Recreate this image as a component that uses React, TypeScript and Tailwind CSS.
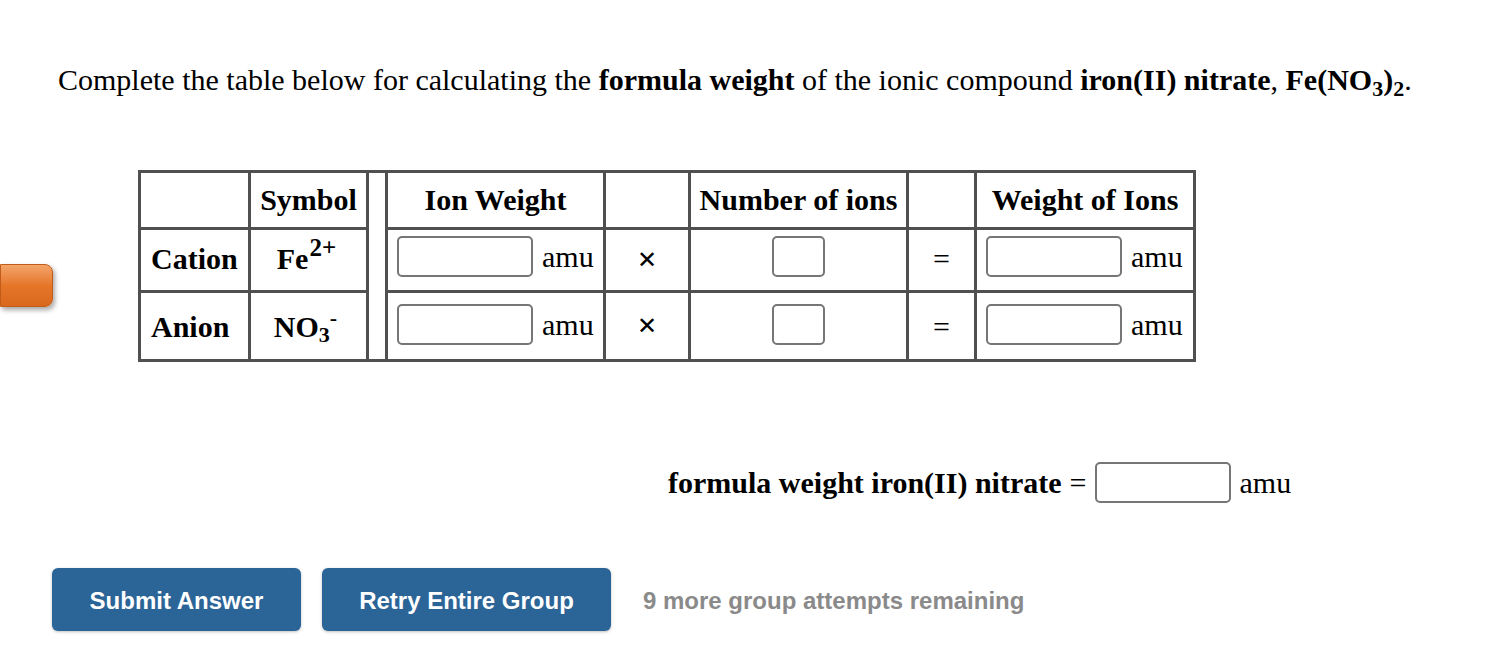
import React from 'react'

const serif = { fontFamily: '"Liberation Serif", "Times New Roman", serif' }

function Box({ w }: { w: string }) {
  return <input type="text" className={`${w} h-[41px] rounded-[5px] border-2 border-[#767676] bg-white outline-none`} />
}

function WeightCell({ pb }: { pb: string }) {
  return (
    <div className={`flex items-center gap-[9px] pl-[9px] ${pb}`}>
      <Box w="w-[136px]" />
      <span>amu</span>
    </div>
  )
}

export default function App() {
  const cell = 'border-[3px] border-[#505050] p-0'
  return (
    <div className="min-h-screen w-[1496px] bg-white relative" style={serif}>
      {/* side tab */}
      <div className="absolute left-0 top-[264px] w-[53px] h-[43px] rounded-r-[8px] bg-gradient-to-b from-[#f3a468] via-[#e57628] to-[#d9681d] border border-[#c25a18] shadow-[2px_3px_5px_rgba(0,0,0,0.35)]" />

      <div className="pt-[62px] pl-[58px] text-[30px] leading-[36px] text-black">
        Complete the table below for calculating the <b>formula weight</b> of the ionic compound{' '}
        <b>iron(II) nitrate</b>, <b>Fe(NO<sub className="text-[22px]">3</sub>)<sub className="text-[22px]">2</sub></b>.
      </div>

      <div className="pl-[138px] pt-[72px]">
        <table className="border-collapse table-fixed w-[1055px] text-[30px] border-[3px] border-[#505050]">
          <colgroup>
            <col className="w-[110px]" />
            <col className="w-[118px]" />
            <col className="w-[19px]" />
            <col className="w-[218px]" />
            <col className="w-[85px]" />
            <col className="w-[218px]" />
            <col className="w-[68px]" />
            <col className="w-[219px]" />
          </colgroup>
          <tbody>
            <tr className="h-[57px] font-bold">
              <td className={cell}></td>
              <td className={`${cell} text-center`}>
                <div className="pb-[2px]">Symbol</div>
              </td>
              <td className={cell} rowSpan={3}></td>
              <td className={`${cell} text-center`}>
                <div className="pb-[2px]">Ion Weight</div>
              </td>
              <td className={cell}></td>
              <td className={`${cell} text-center`}>
                <div className="pb-[2px]">Number of ions</div>
              </td>
              <td className={cell}></td>
              <td className={`${cell} text-center`}>
                <div className="pb-[2px]">Weight of Ions</div>
              </td>
            </tr>
            <tr className="h-[63px]">
              <td className={`${cell} font-bold pl-[10px]`}>
                <div className="pb-[4px]">Cation</div>
              </td>
              <td className={`${cell} font-bold text-center`}>
                <div className="pb-[4px] pr-[4px]">
                  Fe<sup className="text-[25px] relative top-[-13px] ml-[1px]">2+</sup>
                </div>
              </td>
              <td className={cell}>
                <WeightCell pb="pb-[8px]" />
              </td>
              <td className={`${cell} text-center text-[24px]`}>
                <span className="font-['Liberation_Sans']">✕</span>
              </td>
              <td className={cell}>
                <div className="flex justify-center pb-[8px]">
                  <Box w="w-[53px]" />
                </div>
              </td>
              <td className={`${cell} text-center`}>
                <div className="pb-[4px]">=</div>
              </td>
              <td className={cell}>
                <WeightCell pb="pb-[8px]" />
              </td>
            </tr>
            <tr className="h-[69px]">
              <td className={`${cell} font-bold pl-[10px]`}>Anion</td>
              <td className={`${cell} font-bold text-center`}>
                <div className="pr-[6px]">
                  NO<sub className="text-[22px]">3</sub>
                  <sup className="text-[22px] relative top-[-12px]">-</sup>
                </div>
              </td>
              <td className={cell}>
                <WeightCell pb="pb-[4px]" />
              </td>
              <td className={`${cell} text-center text-[24px]`}>
                <span className="font-['Liberation_Sans']">✕</span>
              </td>
              <td className={cell}>
                <div className="flex justify-center pb-[4px]">
                  <Box w="w-[53px]" />
                </div>
              </td>
              <td className={`${cell} text-center`}>=</td>
              <td className={cell}>
                <WeightCell pb="pb-[4px]" />
              </td>
            </tr>
          </tbody>
        </table>
      </div>

      <div className="flex items-center pl-[668px] pt-[98px] text-[30px]">
        <b>formula weight iron(II) nitrate</b>
        <span className="ml-[8px]">=</span>
        <div className="ml-[9px]">
          <Box w="w-[136px]" />
        </div>
        <span className="ml-[8px]">amu</span>
      </div>

      <div className="flex items-center pl-[52px] pt-[63px] font-['Liberation_Sans',Arial,sans-serif]">
        <button className="w-[249px] h-[63px] rounded-[6px] bg-[#2b6496] text-white font-bold text-[24px] shadow-[0_1px_3px_rgba(0,0,0,0.25)]">
          <span className="relative top-[1px]">Submit Answer</span>
        </button>
        <button className="ml-[21px] w-[289px] h-[63px] rounded-[6px] bg-[#2b6496] text-white font-bold text-[24px] shadow-[0_1px_3px_rgba(0,0,0,0.25)]">
          <span className="relative top-[1px]">Retry Entire Group</span>
        </button>
        <span className="ml-[32px] text-[#8a8a8a] font-bold text-[24px] relative top-[1px]">
          9 more group attempts remaining
        </span>
      </div>
    </div>
  )
}
